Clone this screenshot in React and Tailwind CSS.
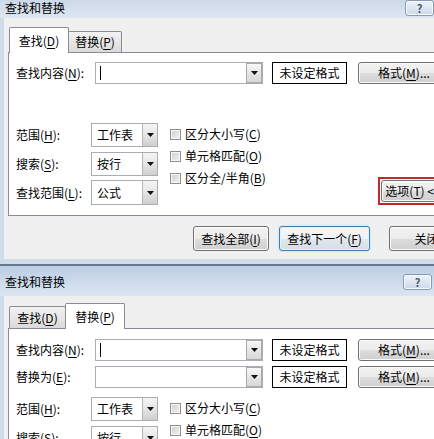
// Excel "查找和替换" dialog, Find tab above Replace tab (Win7 look)
const BTN =
  "flex items-center justify-center rounded-[3px] border border-[#707070] bg-[linear-gradient(to_bottom,#f2f2f2_0%,#ebebeb_50%,#dddddd_51%,#cfcfcf_100%)] shadow-[inset_0_0_0_1px_#fbfbfb]";
const DEFAULT_BTN =
  "flex items-center justify-center rounded-[3px] border border-[#3c7fb1] bg-[linear-gradient(to_bottom,#f4f7f9_0%,#eef2f5_50%,#e2e8ec_51%,#d6dee4_100%)] shadow-[inset_0_0_0_1px_#dff3fc,0_0_2px_#9fd3ef]";

function U({ children }) {
  return <span className="underline decoration-1 underline-offset-[2px]">{children}</span>;
}

function Caret() {
  return (
    <svg width="7" height="4" viewBox="0 0 7 4">
      <path d="M0 0H7L3.5 4Z" fill="#111" />
    </svg>
  );
}

function HelpButton() {
  return (
    <div className="flex h-[16px] w-[29px] shrink-0 items-center justify-center rounded-[3px] border border-[#8a9bb0] bg-[linear-gradient(to_bottom,#eef3f9,#cbd9ea)] text-[11px] font-bold text-[#46566a] shadow-[inset_0_0_0_1px_#f5f8fc]">
      ?
    </div>
  );
}

function Tabs({ active }) {
  const on =
    "relative z-10 -mb-px flex h-[26px] w-[60px] items-center justify-center rounded-t-[2px] border border-b-0 border-[#898c95] bg-white";
  const off =
    "flex w-[54px] items-center justify-center rounded-t-[2px] border border-b-0 border-[#898c95] bg-[linear-gradient(to_bottom,#f3f3f3,#dadada)]";
  if (active === "find") {
    return (
      <div className="flex h-[25px] items-end pl-[1px]">
        <div className={on}>
          查找(<U>D</U>)
        </div>
        <div className={`${off} -ml-px h-[21px]`}>
          替换(<U>P</U>)
        </div>
      </div>
    );
  }
  return (
    <div className="flex h-[25px] items-end pl-[1px]">
      <div className={`${off} h-[22px] w-[57px]`}>
        查找(<U>D</U>)
      </div>
      <div className={`${on} -ml-px`}>
        替换(<U>P</U>)
      </div>
    </div>
  );
}

function TextRow({ label, k, cursor }) {
  return (
    <div className="flex h-[22px] items-center">
      <span className="w-[79px]">
        {label}(<U>{k}</U>):
      </span>
      <div className="flex h-full w-[168px] items-center border border-[#abadb3] bg-white pl-[4px]">
        {cursor && <div className="h-[14px] w-px bg-black" />}
        <div className="ml-auto flex h-[20px] w-[16px] items-center justify-center border border-[#a9a9a9] bg-[linear-gradient(to_bottom,#f7f7f7,#e6e6e6_50%,#d8d8d8)]">
          <Caret />
        </div>
      </div>
      <div className="ml-[9px] flex h-full w-[75px] items-center justify-center border border-black bg-white">
        未设定格式
      </div>
      <div className={`ml-[11px] h-full w-[92px] ${BTN}`}>
        格式(<U>M</U>)...
      </div>
    </div>
  );
}

function ListRow({ label, value, className }) {
  return (
    <div className={`flex items-center ${className}`}>
      <span className="w-[75px]">{label}</span>
      <div className="flex h-full w-[67px] items-center border border-[#a8acb3] bg-white">
        <span className="flex-1 pl-[5px]">{value}</span>
        <div className="flex h-full w-[15px] items-center justify-center border-l border-[#b5b5b5] bg-[linear-gradient(to_bottom,#f5f5f5,#e5e5e5_50%,#cfcfcf)]">
          <Caret />
        </div>
      </div>
    </div>
  );
}

function Check({ label, k }) {
  return (
    <div className="flex h-[22px] items-center">
      <div className="h-[11px] w-[11px] border border-[#8e8f8f] bg-[linear-gradient(135deg,#cfcfcf,#f2f2f2)] shadow-[inset_0_0_0_1px_#f7f7f7]" />
      <span className="ml-[4px]">
        {label}(<U>{k}</U>)
      </span>
    </div>
  );
}

function OptionsBlock() {
  return (
    <div className="flex items-end">
      <div className="flex flex-col">
        <ListRow
          label={<>范围(<U>H</U>):</>}
          value="工作表"
          className="h-[24px]"
        />
        <ListRow
          label={<>搜索(<U>S</U>):</>}
          value="按行"
          className="mt-[5px] h-[24px]"
        />
        <ListRow
          label={<>查找范围(<U>L</U>):</>}
          value="公式"
          className="mt-[4px] h-[25px]"
        />
      </div>
      <div className="ml-[12px] flex w-[208px] flex-col self-start">
        <Check label="区分大小写" k="C" />
        <Check label="单元格匹配" k="O" />
        <Check label="区分全/半角" k="B" />
      </div>
      <div className="border-2 border-[#c4262e] p-px">
        <div className={`h-[22px] w-[64px] ${BTN}`}>
          选项(<U>T</U>) &lt;&lt;
        </div>
      </div>
    </div>
  );
}

function FindDialog() {
  return (
    <div className="flex w-[480px] flex-col">
      <div className="flex h-[18px] items-start bg-[linear-gradient(to_bottom,#cbd9e9,#dee7f1)]">
        <span className="w-[405px] pl-[5px] leading-[16px]">查找和替换</span>
        <HelpButton />
      </div>
      <div className="flex">
        <div className="w-[4px] bg-[#cfdcea]" />
        <div className="flex flex-1 flex-col pb-[8px] pl-[4px] pt-[9px]">
          <Tabs active="find" />
          <div className="flex flex-col border border-[#898c95] bg-white pb-[10px] pl-[7px] pt-[9px]">
            <TextRow label="查找内容" k="N" cursor />
            <div className="mt-[39px]">
              <OptionsBlock />
            </div>
          </div>
          <div className="mt-[10px] flex h-[25px] pl-[185px]">
            <div className={`w-[76px] ${BTN}`}>
              查找全部(<U>I</U>)
            </div>
            <div className={`ml-[10px] w-[91px] ${DEFAULT_BTN}`}>
              查找下一个(<U>F</U>)
            </div>
            <div className={`ml-[19px] w-[75px] ${BTN}`}>关闭</div>
          </div>
        </div>
      </div>
      <div className="h-[5px] bg-[#cfdcea]" />
      <div className="h-[2px] bg-[#68798d]" />
    </div>
  );
}

function ReplaceDialog() {
  return (
    <div className="flex w-[480px] flex-col">
      <div className="flex h-[30px] items-center bg-[linear-gradient(to_bottom,#bccee3,#dbe6f2)] pt-[2px]">
        <span className="w-[403px] pl-[5px]">查找和替换</span>
        <HelpButton />
      </div>
      <div className="flex">
        <div className="w-[4px] bg-[#cfdcea]" />
        <div className="flex flex-1 flex-col pl-[4px] pt-[7px]">
          <Tabs active="replace" />
          <div className="flex flex-col border border-[#898c95] bg-white pb-[20px] pl-[7px] pt-[10px]">
            <TextRow label="查找内容" k="N" cursor />
            <div className="mt-[5px]">
              <TextRow label="替换为" k="E" />
            </div>
            <div className="mt-[9px]">
              <OptionsBlock />
            </div>
          </div>
        </div>
      </div>
    </div>
  );
}

export default function App() {
  return (
    <div className="h-[439px] w-[434px] overflow-hidden bg-[#f0f0f0] font-['Noto_Sans_CJK_SC','Noto_Sans',sans-serif] text-[12px] leading-none text-black">
      <FindDialog />
      <ReplaceDialog />
    </div>
  );
}
